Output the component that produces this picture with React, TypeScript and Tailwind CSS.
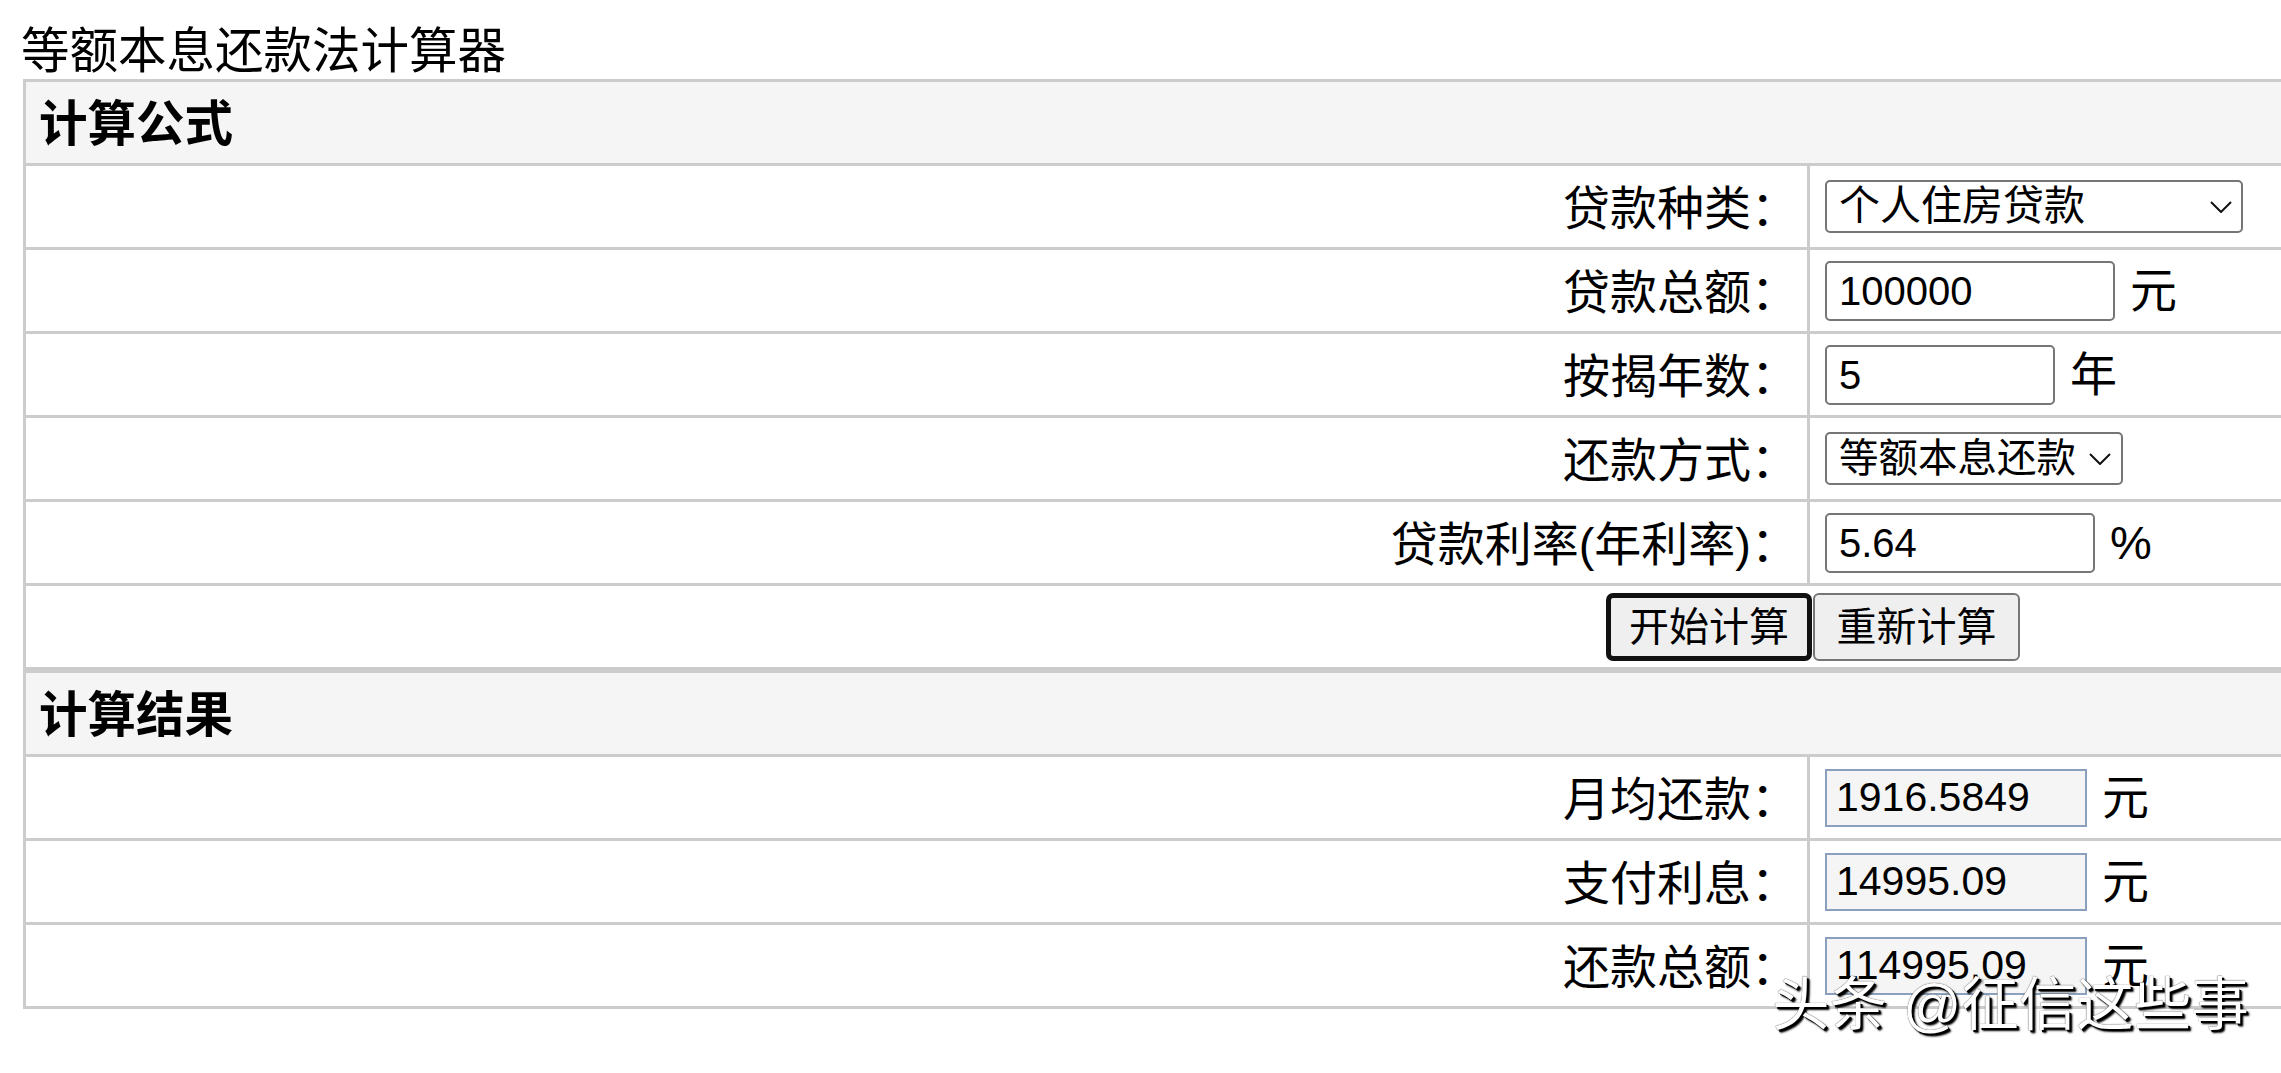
import React from "react";

const Chevron = () => (
  <svg width="22" height="12" viewBox="0 0 22 12" className="shrink-0">
    <polyline points="1,1 11,11 21,1" fill="none" stroke="#111" strokeWidth="2" />
  </svg>
);

function Row({ label, children }: { label: string; children: React.ReactNode }) {
  return (
    <div className="grid h-[84px] grid-cols-[1781px_3px_1fr] border-t-[3px] border-[#cccccc]">
      <div className="flex items-center justify-end pr-[9px] pt-[4px] text-[47px] leading-none">{label}</div>
      <div className="bg-[#cccccc]" />
      <div className="flex items-center pl-[15px]">{children}</div>
    </div>
  );
}

function Field({ value, width }: { value: string; width: string }) {
  return (
    <div
      className={`flex h-[60px] items-center rounded-[5px] border-2 border-[#767676] bg-white pl-[12px] text-[40px] leading-none ${width}`}
    >
      {value}
    </div>
  );
}

function Result({ value }: { value: string }) {
  return (
    <div className="flex h-[58px] w-[262px] items-center border-2 border-[#8aa0bc] bg-[#f5f5f5] pl-[9px] text-[41px] leading-none">
      {value}
    </div>
  );
}

function Unit({ children }: { children: React.ReactNode }) {
  return <span className="ml-[15px] text-[47px] leading-none">{children}</span>;
}

export default function App() {
  return (
    <div className="relative h-[1073px] w-[2281px] overflow-hidden bg-white text-black font-['Liberation_Sans','Noto_Sans_CJK_SC',sans-serif]">
      <div className="pl-[21px] pt-[23px]">
        <div className="flex h-[56px] items-center text-[48.5px] leading-none">等额本息还款法计算器</div>
        <div className="ml-[2px] w-[3580px]">
          {/* Table 1 */}
          <div className="border-[3px] border-[#cccccc]">
            <div className="flex h-[81px] items-center bg-[#f5f5f5] pl-[13px] pt-[3px] text-[48.5px] font-bold leading-none">
              计算公式
            </div>
            <Row label="贷款种类：">
              <div className="flex h-[53px] w-[418px] items-center justify-between rounded-[5px] border-2 border-[#767676] bg-white pl-[12px] pr-[9px] text-[41px] leading-none">
                <span>个人住房贷款</span>
                <Chevron />
              </div>
            </Row>
            <Row label="贷款总额：">
              <Field value="100000" width="w-[290px]" />
              <Unit>元</Unit>
            </Row>
            <Row label="按揭年数：">
              <Field value="5" width="w-[230px]" />
              <Unit>年</Unit>
            </Row>
            <Row label="还款方式：">
              <div className="flex h-[53px] w-[298px] items-center justify-between rounded-[5px] border-2 border-[#767676] bg-white pl-[12px] pr-[10px] text-[39.5px] leading-none">
                <span>等额本息还款</span>
                <Chevron />
              </div>
            </Row>
            <Row label="贷款利率(年利率)：">
              <Field value="5.64" width="w-[270px]" />
              <Unit>%</Unit>
            </Row>
            <div className="flex h-[84px] items-center justify-center border-t-[3px] border-[#cccccc]">
              <button className="flex h-[68px] w-[206px] items-center justify-center rounded-[7px] border-[5px] border-[#111111] bg-[#efefef] text-[40px] leading-none">
                开始计算
              </button>
              <button className="ml-[1px] flex h-[68px] w-[207px] items-center justify-center rounded-[6px] border-2 border-[#767676] bg-[#efefef] text-[40px] leading-none">
                重新计算
              </button>
            </div>
          </div>
          {/* Table 2 */}
          <div className="border-[3px] border-[#cccccc]">
            <div className="flex h-[81px] items-center bg-[#f5f5f5] pl-[13px] pt-[3px] text-[48.5px] font-bold leading-none">
              计算结果
            </div>
            <Row label="月均还款：">
              <Result value="1916.5849" />
              <Unit>元</Unit>
            </Row>
            <Row label="支付利息：">
              <Result value="14995.09" />
              <Unit>元</Unit>
            </Row>
            <Row label="还款总额：">
              <Result value="114995.09" />
              <Unit>元</Unit>
            </Row>
          </div>
        </div>
      </div>
      <div className="absolute left-[1772px] top-[977px] whitespace-nowrap text-[57.5px] leading-none text-white [text-shadow:2px_2px_0_#000,3px_3px_2px_#000,0_0_1px_#000]">
        头条 @征信这些事
      </div>
    </div>
  );
}
